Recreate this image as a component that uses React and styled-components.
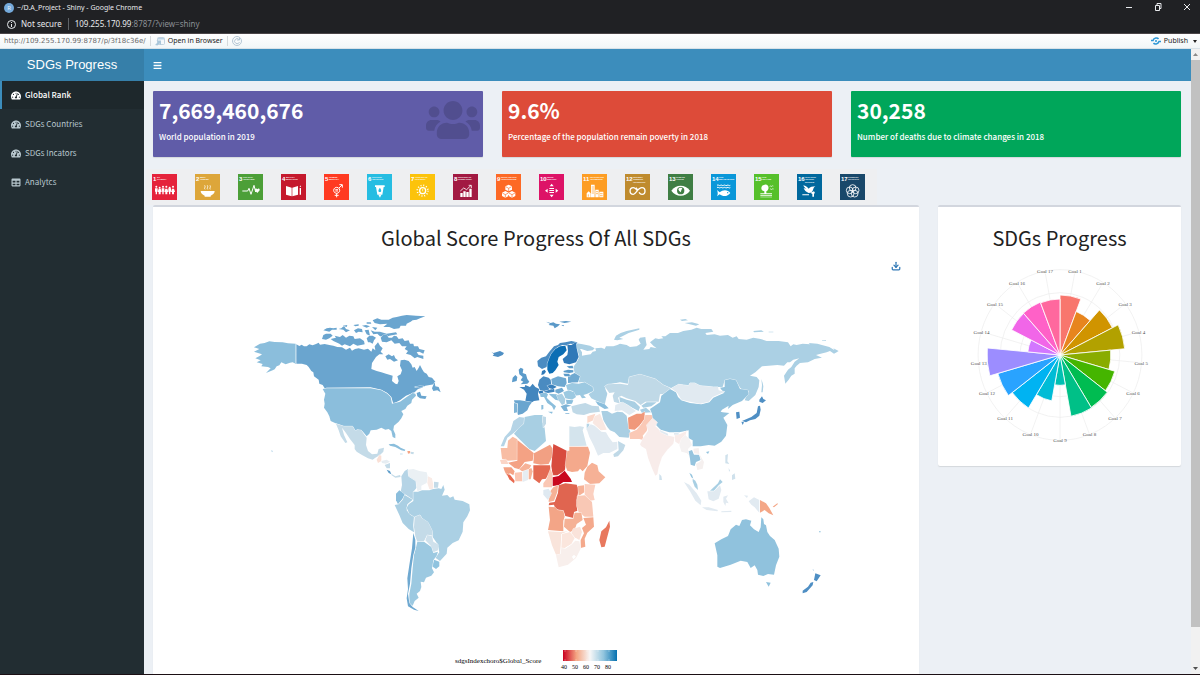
import React, { useState } from 'react';
import styled, { createGlobalStyle } from 'styled-components';
import { FaBars, FaTable, FaTachometerAlt, FaUsers } from 'react-icons/fa';
import { FiDownload } from 'react-icons/fi';

const GlobalStyle = createGlobalStyle`
  * {
    box-sizing: border-box;
  }

  body {
    margin: 0;
    overflow: hidden;
    font-family: 'Noto Sans CJK SC', 'Noto Sans', sans-serif;
  }

  button {
    font: inherit;
    border: none;
    background: transparent;
    padding: 0;
    cursor: pointer;
  }
`;

// Browser window
const Window = styled.div`
  height: 100vh;
  display: flex;
  flex-direction: column;
  overflow: hidden;
  border-bottom: 1px solid #1b0f14;
`;

const TitleBar = styled.div`
  display: flex;
  align-items: center;
  height: 15px;
  padding: 0 9px 0 4px;
  gap: 3px;
  background: #202124;
  color: #e8eaed;
  font-family: 'Noto Sans', sans-serif;
  font-size: 7px;
  line-height: 12px;
`;

const Favicon = styled.span`
  width: 10px;
  height: 10px;
  border-radius: 50%;
  background: #75aadb;
  color: #e6f0fa;
  font-size: 6px;
  line-height: 10px;
  text-align: center;
`;

const WindowButtons = styled.div`
  display: flex;
  align-self: flex-start;
  align-items: center;
  gap: 21px;
  height: 13px;
  margin-left: auto;
`;

const WindowButton = styled.button`
  display: flex;
  color: #e8eaed;
`;

const AddressBar = styled.div`
  display: flex;
  align-items: center;
  height: 19px;
  padding: 0 7px;
  background: #202124;
  border-bottom: 1px solid #4a4548;
  color: #e8eaed;
  font-family: 'Noto Sans', sans-serif;
  font-size: 8px;
  line-height: 12px;
`;

const Secure = styled.span`
  margin-left: 5px;
  padding-right: 6px;
  margin-right: 6px;
  border-right: 1px solid #5f6368;
`;

const UrlRest = styled.span`
  color: #8b8f94;
`;

const ViewerBar = styled.div`
  display: flex;
  align-items: center;
  height: 15px;
  padding: 0 3px 0 4px;
  background: linear-gradient(#fff, #f1f6f8);
  border-bottom: 1px solid #d8e2e8;
  color: #222;
  font-family: 'Noto Sans', sans-serif;
  font-size: 7px;
  line-height: 12px;
`;

const ViewerUrl = styled.span`
  color: #6b6b6b;
  font-family: 'DejaVu Sans', sans-serif;
`;

const ViewerDivider = styled.span`
  width: 1px;
  height: 10px;
  margin: 0 4px;
  background: #d6dadc;
`;

const ViewerButton = styled.button`
  display: flex;
  align-items: center;
  gap: 3px;
  color: #222;
  margin-left: ${(props) => (props.$right ? 'auto' : '0')};
`;

// Dashboard
const Dashboard = styled.div`
  flex: 1;
  min-height: 0;
  display: grid;
  grid-template-columns: 144px 1fr 9px;
`;

const Sidebar = styled.aside`
  background: #222d32;
`;

const Brand = styled.div`
  height: 32px;
  background: #367fa9;
  color: #fff;
  font-family: 'Liberation Sans', Arial, sans-serif;
  font-size: 13px;
  line-height: 32px;
  text-align: center;
`;

const Menu = styled.nav`
  display: flex;
  flex-direction: column;
  gap: 1px;
`;

const MenuItem = styled.a`
  display: flex;
  align-items: center;
  gap: 4px;
  height: 28px;
  padding-left: 9px;
  border-left: 2px solid ${(props) => (props.$active ? '#3c8dbc' : 'transparent')};
  background: ${(props) => (props.$active ? '#1e282c' : 'transparent')};
  color: ${(props) => (props.$active ? '#fff' : '#b8c7ce')};
  font-size: 8px;
  font-weight: ${(props) => (props.$active ? 500 : 400)};
  line-height: 12px;
  text-decoration: none;

  svg {
    width: 10px;
    height: 9px;
  }
`;

const Page = styled.div`
  min-width: 0;
  overflow: hidden;
  background: #ecf0f5;
`;

const Navbar = styled.header`
  display: flex;
  align-items: center;
  height: 32px;
  padding-left: 9px;
  background: #3c8dbc;
`;

const MenuToggle = styled.button`
  display: flex;
  color: #fff;
  font-size: 9px;
`;

const Content = styled.main`
  padding: 10px 10px 0 9px;
`;

const BoxRow = styled.div`
  display: grid;
  grid-template-columns: repeat(3, 1fr);
  gap: 19px;
`;

const ValueBox = styled.section`
  display: flex;
  justify-content: space-between;
  height: 66px;
  padding: 7px 3px 0 6px;
  border-radius: 1px;
  background: ${(props) => props.$color};
  color: #fff;
  box-shadow: 0 1px 1px rgba(0, 0, 0, 0.1);
`;

const Value = styled.h3`
  margin: 0 0 8px;
  font-size: 21px;
  font-weight: 700;
  line-height: 24px;
`;

const Caption = styled.p`
  margin: 0;
  font-size: 8px;
  font-weight: 500;
  line-height: 14px;
`;

const BoxIcon = styled.div`
  color: rgba(0, 0, 0, 0.15);
  font-size: 54px;
  line-height: 0;
  margin-top: -5px;
`;

const GoalStrip = styled.div`
  display: flex;
  width: fit-content;
  margin: 12px 0 0 -7px;
  background: #eeeff1;
`;

const GoalButton = styled.button`
  display: flex;
  padding: 5px 12px 5px 6px;

  svg {
    width: 25px;
    height: 26px;
  }
`;

const CardRow = styled.div`
  display: grid;
  grid-template-columns: 766fr 243fr;
  gap: 19px;
  align-items: start;
`;

const Card = styled.section`
  padding-top: 19px;
  border-top: 2px solid #d2d6de;
  border-radius: 2px;
  background: #fff;
  box-shadow: 0 1px 1px rgba(0, 0, 0, 0.1);
`;

const CardTitle = styled.h2`
  margin: 0;
  color: #222;
  font-size: 20px;
  font-weight: 400;
  line-height: 24px;
  text-align: center;
`;

const ChartTools = styled.div`
  display: flex;
  justify-content: flex-end;
  align-items: center;
  height: 28px;
  padding: 4px 18px 0 0;
`;

const DownloadButton = styled.button`
  display: flex;
  color: #337ab7;
  font-size: 10px;
`;

const Chart = styled.svg`
  display: block;
  width: 100%;
  height: auto;
  font-family: 'Liberation Serif', 'Times New Roman', serif;
`;

const Scrollbar = styled.div`
  display: flex;
  flex-direction: column;
  align-items: center;
  background: #f1f1f1;
`;

const ScrollArrow = styled.div`
  height: 11px;
  display: flex;
  align-items: center;
`;

const ScrollTrack = styled.div`
  flex: 1;
  width: 100%;
`;

const ScrollThumb = styled.div`
  height: 94%;
  background: #c1c1c1;
`;

const menuItems = [
  { label: 'Global Rank', icon: <FaTachometerAlt /> },
  { label: 'SDGs Countries', icon: <FaTachometerAlt /> },
  { label: 'SDGs Incators', icon: <FaTachometerAlt /> },
  { label: 'Analytcs', icon: <FaTable /> },
];

const boxes = [
  { value: '7,669,460,676', caption: 'World population in 2019', color: '#605ca8', icon: <FaUsers /> },
  { value: '9.6%', caption: 'Percentage of the population remain poverty in 2018', color: '#dd4b39' },
  { value: '30,258', caption: 'Number of deaths due to climate changes in 2018', color: '#00a65a' },
];

const people = [13, 23, 33, 43, 53, 63];

// Goal pictograms, each on a 75 x 78 tile
const goals = [
  {
    color: '#e5233b',
    lines: ['NO', 'POVERTY'],
    art: people.map((x, i) => (
      <g key={x}>
        <circle cx={x} cy={i % 3 === 1 ? 41 : 38} r="3" />
        <path d={i % 2 ? `M${x - 3} 44h6l3 10h-3v7h-6v-7h-3z` : `M${x - 4} 43h8v10h-2v8h-4v-8h-2z`} />
      </g>
    )),
  },
  {
    color: '#dda63a',
    lines: ['ZERO', 'HUNGER'],
    art: (
      <>
        <path d="M17 51h42c0 7-5 11-12 14v3H29v-3c-7-3-12-7-12-14z" />
        <path d="M30 46c-4-4 3-6-1-12M38 46c-4-4 3-6-1-12M46 46c-4-4 3-6-1-12" fill="none" stroke="#fff" strokeWidth="2.5" />
      </>
    ),
  },
  {
    color: '#4c9f38',
    lines: ['GOOD HEALTH', 'AND WELL-BEING'],
    art: (
      <>
        <path d="M13 51h16l4-8 6 18 9-27 5 20 3-4" fill="none" stroke="#fff" strokeWidth="3" />
        <path d="M58 57l-7-8c-1-6 5-7 7-3 2-4 8-3 7 3z" />
      </>
    ),
  },
  {
    color: '#c5192d',
    lines: ['QUALITY', 'EDUCATION'],
    art: (
      <>
        <path d="M15 36l17 5v26l-17-5zM51 36l-17 5v26l17-5z" />
        <path d="M56 42h4v20h-4zM56 39l2-5 2 5z" />
      </>
    ),
  },
  {
    color: '#ff3a21',
    lines: ['GENDER', 'EQUALITY'],
    art: (
      <path
        d="M38 40a9 9 0 1 0 .1 0zM38 58v12M32 64h12M44 43l10-10M46 32h9v9M34 47h8M34 51h8"
        fill="none"
        stroke="#fff"
        strokeWidth="3"
      />
    ),
  },
  {
    color: '#26bde2',
    lines: ['CLEAN WATER', 'AND SANITATION'],
    art: (
      <>
        <path d="M24 34h29v5h-3l-4 23H31l-4-23h-3z" />
        <path d="M34 62h9l-4 9z" />
        <path d="M38.500 41c6 8 5 13 0 13s-6-5 0-13z" fill="#26bde2" />
      </>
    ),
  },
  {
    color: '#fcc30b',
    lines: ['AFFORDABLE AND', 'CLEAN ENERGY'],
    art: (
      <>
        <circle cx="38" cy="50" r="9" fill="none" stroke="#fff" strokeWidth="4" />
        <path d="M38 45v7" stroke="#fff" strokeWidth="2" />
        <circle cx="38" cy="50" r="16" fill="none" stroke="#fff" strokeWidth="5" strokeDasharray="3 5.370" />
      </>
    ),
  },
  {
    color: '#a21942',
    lines: ['DECENT WORK AND', 'ECONOMIC GROWTH'],
    art: (
      <>
        <path d="M22 57h7v12h-7zM31 52h7v17h-7zM40 54h7v15h-7zM49 44h7v25h-7z" />
        <path d="M22 51l10-9 9 5 13-13M47 34h8v8" fill="none" stroke="#fff" strokeWidth="2.500" />
      </>
    ),
  },
  {
    color: '#fd6925',
    lines: ['INDUSTRY, INNOVATION', 'AND INFRASTRUCTURE'],
    art: (
      <>
        <path d="M38 32l10 5v10l-10 5-10-5V37zM28 51l10 5v10l-10 5-10-5V56zM48 51l10 5v10l-10 5-10-5V56z" />
        <path d="M29 38l9 5 9-5M38 43v8M19 57l9 5 9-5M28 62v8M39 57l9 5 9-5M48 62v8" fill="none" stroke="#fd6925" strokeWidth="2" />
      </>
    ),
  },
  {
    color: '#dd1367',
    lines: ['REDUCED', 'INEQUALITIES'],
    art: <path d="M38 29l6 8H32zM38 70l6-8H32zM18 50l8-6v12zM58 50l-8-6v12zM31 42h14v3H31zM31 48h14v3H31zM31 54h14v3H31z" />,
  },
  {
    color: '#fd9d24',
    lines: ['SUSTAINABLE CITIES', 'AND COMMUNITIES'],
    art: (
      <>
        <path d="M14 70V58l6-6 6 6v12zM27 32h11v38H27zM40 47h10v23H40zM52 53h12v17H52z" />
        <path d="M29 39h7M29 45h7M29 51h7M29 57h7M42 53h6M42 59h6M54 59h8M19 61v7M54 65h8" stroke="#fd9d24" strokeWidth="2" />
      </>
    ),
  },
  {
    color: '#bf8b2e',
    lines: ['RESPONSIBLE', 'CONSUMPTION', 'AND PRODUCTION'],
    art: (
      <path
        d="M38 51c-6-8-9-10-13-10-13 0-13 20 0 20 8 0 13-20 26-20 12 0 12 20 0 20-4 0-7-3-9-6M33 41l6 9"
        fill="none"
        stroke="#fff"
        strokeWidth="4"
      />
    ),
  },
  {
    color: '#3f7e44',
    lines: ['CLIMATE', 'ACTION'],
    art: (
      <>
        <path d="M10 50c14-20 42-20 56 0-14 20-42 20-56 0z" />
        <circle cx="38" cy="50" r="11" fill="#3f7e44" />
        <path d="M31 45c4-6 12-4 12 0-5 2-2 6-5 10-3-3-6-5-7-10z" />
      </>
    ),
  },
  {
    color: '#0a97d9',
    lines: ['LIFE', 'BELOW WATER'],
    art: (
      <>
        <path d="M18 34c4-4 6 3 10 0s6 3 10 0 6 3 10 0 6 3 10 0M18 41c4-4 6 3 10 0s6 3 10 0 6 3 10 0 6 3 10 0" fill="none" stroke="#fff" strokeWidth="3" />
        <path d="M18 48l8 7c10-9 24-9 32 2-8 11-22 12-32 4l-8 6c3-7 3-12 0-19z" />
        <circle cx="50" cy="56" r="2" fill="#0a97d9" />
      </>
    ),
  },
  {
    color: '#56c02b',
    lines: ['LIFE', 'ON LAND'],
    art: (
      <>
        <path d="M32 32c14-2 15 16 5 20v6h17v3H19v-3h12v-6c-14-4-10-18 1-20zM19 64h35v2H19zM19 68h35v2H19z" />
        <path d="M47 37c3-3 4 0 5 1 1-3 3-3 6-2M48 46c3-3 4 0 5 1 1-3 3-3 6-2" fill="none" stroke="#fff" strokeWidth="2" />
      </>
    ),
  },
  {
    color: '#00689d',
    lines: ['PEACE, JUSTICE', 'AND STRONG', 'INSTITUTIONS'],
    art: (
      <>
        <path d="M19 34c7 2 12 5 16 10 4-5 12-7 20-7-5 3-5 6-7 11-2 6-6 9-13 9-8-3-13-8-15-15l8 3c-4-3-7-6-9-11z" />
        <path d="M16 61h20v3H16zM40 56l11-4 3 5-3 2v9h-5v-8z" />
      </>
    ),
  },
  {
    color: '#19486a',
    lines: ['PARTNERSHIPS', 'FOR THE GOALS'],
    art: (
      <g fill="none" stroke="#fff" strokeWidth="2.500">
        <circle cx="38" cy="42" r="10" />
        <circle cx="47" cy="49" r="10" />
        <circle cx="44" cy="59" r="10" />
        <circle cx="32" cy="59" r="10" />
        <circle cx="29" cy="49" r="10" />
      </g>
    ),
  },
];

// Country outlines. Every region has its own origin; three units are one chart pixel.
const mapRegions = [
  {
    name: 'americas',
    x: 240,
    y: 305,
    shapes: [
      ['#8bbedc', 'M42 127L60 116 74 114 88 109 104 111 128 112 144 115 167 116 167 176 158 172 150 173 137 178 124 172 118 181 110 184 104 193 98 196 78 204 92 190 84 186 64 184 68 177 50 172 62 166 46 160 60 152 66 148 42 140 58 132z'],
      ['#8bbedc', 'M94 436l4 2-2 4z'],
      ['#6aa5cf', 'M169 118L178 123 185 119 192 124 200 124 208 118 218 121 228 117 236 113 240 119 254 117 268 120 280 122 292 126 306 127 318 134 330 128 336 137 345 132 356 130 372 134 384 131 394 140 398 130 406 136 404 124 414 112 420 122 428 130 422 140 430 148 418 148 408 156 396 174 394 192 410 198 424 202 438 206 458 212 456 228 466 236 472 238 476 228 472 214 482 208 486 196 480 182 482 166 494 164 506 168 514 178 518 188 524 186 530 198 536 188 540 180 546 192 552 202 560 206 566 216 576 218 586 230 582 238 556 242 546 248 534 252 524 262 498 272 480 286 460 296 454 276 442 264 424 254 392 247 260 248 254 250 248 240 238 236 236 224 222 214 220 202 214 198 206 186 200 180 186 176 169 176z'],
      ['#6aa5cf', 'M576 250L580 240 584 232 586 244 596 246 602 262 592 256 580 258zM530 264L540 260 544 272 560 274 556 282 540 280 532 274zM524 246L540 243 552 244 540 248z'],
      ['#6aa5cf', 'M398 46L412 40 424 44 446 44 458 38 470 36 486 32 500 30 528 32 556 34 540 40 530 44 518 46 512 50 500 56 498 62 482 62 478 70 462 72 448 66 430 66 442 56 420 58 404 54z'],
      ['#6aa5cf', 'M246 102L250 90 258 86 272 86 278 92 268 100 258 104zM272 102L288 98 284 92 300 96 308 90 318 98 328 92 340 94 344 102 360 100 372 108 374 118 352 122 340 116 330 124 314 118 306 122 298 116 280 108z'],
      ['#6aa5cf', 'M250 76L260 70 270 68 280 70 290 68 290 74 276 74 268 80zM296 72L304 70 312 62 318 72 330 76 318 82 310 74zM342 76l12-6 12 2 2 10-12-2-8 4zM374 76l12-2 4 18-10-4zM392 76L404 80 420 80 440 86 468 82 472 88 448 92 440 96 420 94 412 86 400 88z'],
      ['#6aa5cf', 'M380 100L388 92 398 92 408 98 402 106 398 116 390 112 384 112zM366 62l12-2 12 4-10 4zM340 60l16-2 0 4-10 2zM396 66l16 2-6 8zM308 62l14-2-2 6zM380 52l12 0 2 4-14 0z'],
      ['#6aa5cf', 'M422 98L430 90 440 90 446 98 456 98 462 92 470 94 476 102 488 100 494 108 506 106 510 116 520 116 522 124 534 124 538 132 554 136 550 146 538 140 530 142 536 150 550 152 550 162 532 156 524 160 512 150 498 146 504 138 494 132 500 124 486 124 478 114 464 116 454 106 440 112 426 110z'],
      ['#6aa5cf', 'M436 154L446 148 456 154 462 150 466 160 474 166 462 170 450 162 442 164z'],
      ['#8bbedc', 'M248 252L260 250 392 250 424 256 442 266 452 276 456 296 480 290 500 276 518 264 526 266 528 272 516 284 514 294 502 302 496 312 484 318 490 328 484 340 476 350 462 362 460 374 466 388 466 400 458 396 454 378 446 372 436 374 424 368 410 374 392 376 388 386 380 394 372 384 364 376 352 374 346 378 338 364 312 364 290 356 272 348 268 334 262 322 252 308 254 296 252 284 256 266z'],
      ['#c4dbe8', 'M288 356L312 364 338 364 346 378 352 374 364 376 372 388 380 398 378 420 384 438 396 448 412 446 416 432 432 428 430 440 420 450 406 458 398 464 384 460 366 450 350 440 344 432 344 420 330 402 318 384 306 368 312 390 322 412 316 414 302 394 296 376z'],
      ['#fae0d6', 'M410 464L418 450 424 452 424 468 414 474z'],
      ['#e6edf2', 'M424 468L440 464 450 470 438 476 426 474z'],
      ['#c4dbe8', 'M434 480L450 474 450 490 440 490zM454 506l12 8 14-4 2 6-16 2-12-8z'],
      ['#5f9ecb', 'M440 494l10 4 4 10-8-4z'],
      ['#8bbedc', 'M446 418L462 416 474 422 482 428 496 434 494 438 484 436 466 426 450 422zM480 446l8 0 0 2-8 0z'],
      ['#f5a585', 'M502 438l8 0 2 6-8 2z'],
      ['#c4dbe8', 'M512 440l10 2-2 6-8-2z'],
      ['#b5d4e6', 'M484 514L494 498 504 492 506 510 528 524 530 548 520 560 520 586 502 572 482 560 486 540z'],
      ['#eaf0f4', 'M504 494L520 492 538 498 560 502 564 518 560 534 544 542 544 556 532 558 528 528 506 514z'],
      ['#f9ebe6', 'M564 514L576 520 580 540 580 556 568 552 562 534z'],
      ['#c4dbe8', 'M582 530L596 532 594 548 582 548z'],
      ['#8bbedc', 'M468 566L478 556 494 568 490 578 474 598 468 586z'],
      ['#aacfe3', 'M464 600L476 598 488 584 494 570 518 584 502 598 500 616 512 630 522 634 520 660 522 682 506 672 488 654 478 630z'],
      ['#abd0e4', 'M520 560L534 560 546 556 568 556 580 552 596 550 604 552 610 540 614 554 606 572 622 570 630 578 640 574 644 584 668 588 688 598 690 616 682 634 670 652 668 680 656 706 638 714 622 728 620 746 600 768 586 758 598 742 592 716 578 696 576 676 556 656 540 630 524 636 508 626 500 608 506 598 520 588z'],
      ['#c4dbe8', 'M524 636L540 630 546 640 564 652 576 676 578 692 562 690 552 708 532 710 526 694 522 666z'],
      ['#cfe1ec', 'M556 706L562 690 576 694 580 710 594 718 594 736 580 742 572 722z'],
      ['#8fc3df', 'M582 764L598 770 598 784 588 792 576 784z'],
      ['#9cc9e1', 'M532 710L552 710 574 726 580 744 594 740 590 752 580 766 576 790 582 802 574 812 558 818 552 832 542 830 544 846 540 858 530 866 536 878 524 888 518 902 508 894 508 866 514 836 518 790 522 750 528 728z'],
      ['#6fa9d1', 'M520 684L526 704 526 728 520 750 514 790 510 836 504 866 508 894 518 906 536 918 522 914 504 904 500 880 504 852 502 820 508 780 516 730z'],
    ],
  },
  {
    name: 'eurasia',
    x: 480,
    y: 305,
    shapes: [
      ['#5b99c8', 'M198 50l14 4 8-2 8 4 12 2-6 6-10 6-4-8-14-2 4-4zM238 50l20-2 16 2-20 4zM244 60l8 0-2 4z'],
      ['#4f8fc4', 'M34 140L40 144 48 142 60 138 72 144 68 150 54 156 38 152 42 148z'],
      ['#abd0e4', 'M286 114L308 118 330 122 344 130 338 136 322 138 304 132 300 132 306 142 306 152 318 150 332 148 338 140 348 138 346 130 364 128 374 132 378 124 400 124 412 120 420 116 440 120 450 126 470 124 482 116 476 104 480 98 496 96 498 110 500 120 490 134 508 132 512 126 530 130 520 122 510 112 526 100 536 102 550 100 544 94 556 94 570 84 594 84 610 78 634 74 650 68 664 72 694 72 700 80 676 84 680 90 704 88 720 92 744 90 758 98 770 94 776 102 800 104 820 98 842 102 860 108 896 108 924 112 932 124 940 118 950 120 968 116 990 118 986 114 1012 116 1034 122 1048 126 1064 136 1060 130 1076 138 1070 142 1062 146 1050 138 1040 142 1022 146 1008 150 1026 158 1016 160 1004 162 984 172 960 174 950 182 944 190 944 206 934 212 926 224 916 236 912 212 924 194 934 186 944 170 958 160 940 164 930 172 922 172 912 182 892 180 866 182 846 184 826 202 810 212 830 216 838 226 836 246 826 270 806 288 794 286 806 258 786 256 776 242 768 226 750 222 734 226 728 246 700 246 660 242 644 234 630 234 626 242 596 238 574 250 550 240 526 222 480 208 448 216 444 236 420 232 378 240 376 252 382 266 378 282 374 300 350 288 334 280 326 268 340 258 338 246 314 232 296 232 300 214 284 204 280 186 290 172 298 156 290 130z'],
      ['#abd0e4', 'M402 104L408 92 422 84 440 78 478 70 478 74 446 84 430 92 418 98 430 102 412 106zM600 44l16-2 8 4-18 2zM614 54l22-2 22 6-10 4zM820 78l24-2 8 4-30 2zM866 80l14 0 0 2-14 0zM1026 106l12-1 0 2-12 0zM844 222L848 234 850 244 848 262 844 262 846 240z'],
      ['#4b8cc2', 'M172 168L184 158 198 154 208 140 222 124 234 120 240 114 256 112 274 108 292 112 290 118 270 116 262 122 248 120 234 126 224 134 214 146 210 158 204 172 200 186 186 192 174 184z'],
      ['#0d6eb4', 'M202 176L208 160 214 146 226 132 240 124 256 122 260 136 250 148 236 156 232 170 236 180 226 196 218 204 208 206 202 194z'],
      ['#3079b8', 'M262 120L274 120 288 112 290 130 296 156 288 172 268 178 252 174 248 162 262 150 264 138z'],
      ['#3079b8', 'M186 198l8-4 4 6-6 8-8 2zM176 258l14 0 0 8-12 0z'],
      ['#5b9bca', 'M116 194L122 188 130 192 128 204 138 208 142 222 148 230 142 236 122 238 130 230 122 226 128 216 118 208zM98 218L106 210 112 216 110 228 96 232z'],
      ['#4386be', 'M118 246L134 246 136 240 150 246 158 236 166 246 178 252 174 266 178 286 162 288 156 292 136 288 140 266 132 254z'],
      ['#4a8bc1', 'M178 224L190 214 206 218 212 224 214 242 206 248 208 256 194 258 180 256 174 240z'],
      ['#6aa5cf', 'M102 286L120 286 156 292 148 302 142 316 128 326 114 330 112 322 114 296 104 294z'],
      ['#7fb4d7', 'M102 294l10 2 0 26-10 2z'],
      ['#8bbedc', 'M180 268L196 262 204 268 200 278 212 290 228 304 222 316 216 304 202 294 192 276 182 276zM204 320l14 0-2 6zM184 300l6 0 0 12-6 2zM206 266L230 268 242 288 226 284 212 272z'],
      ['#4386be', 'M190 260L204 256 222 250 224 260 204 264z'],
      ['#3a80bb', 'M202 242L218 238 230 246 218 252 208 250z'],
      ['#6fa9d1', 'M214 222L234 214 258 220 260 234 254 246 234 244 216 238z'],
      ['#6fa9d1', 'M226 254L246 248 252 258 236 266 226 262zM264 214L284 204 300 214 294 232 264 234z'],
      ['#5b9bca', 'M260 184L278 182 280 190 268 190zM250 198L264 194 280 196 280 202 268 204 252 202zM250 206L268 206 270 214 254 214z'],
      ['#9cc9e1', 'M258 240L276 234 296 236 314 232 338 246 340 258 322 266 310 270 318 278 306 280 300 270 284 272 278 258 262 254z'],
      ['#9cc9e1', 'M250 262L266 256 282 262 288 276 276 284 256 280z'],
      ['#8bbedc', 'M258 284L280 286 276 296 260 298zM346 288L374 298 386 310 374 312 354 300z'],
      ['#aacfe3', 'M230 270L246 266 256 282 254 296 246 300 236 286z'],
      ['#7fb4d7', 'M242 304L258 298 274 302 260 306 264 318 252 318zM256 324l12 0 0 2-12 0z'],
      ['#c0d9e7', 'M374 244L384 238 420 236 444 240 448 216 480 208 526 222 550 240 572 250 554 266 540 268 536 290 496 290 482 300 466 288 440 280 424 272 414 278 420 296 402 290 398 272 404 262 388 264z'],
      ['#aacfe3', 'M418 276L440 284 464 290 480 306 476 318 452 306 436 296 420 292z'],
      ['#e1eaf1', 'M406 300L428 292 446 302 468 318 448 330 426 316 404 318z'],
      ['#aacfe3', 'M484 302L500 292 530 292 514 304 490 308zM480 314L498 308 514 322 486 324z'],
      ['#c0d9e7', 'M274 304L298 298 316 294 336 302 356 304 360 320 330 324 312 330 290 328 278 322z'],
      ['#aacfe3', 'M364 318L382 318 396 326 412 320 428 322 440 332 444 358 452 384 446 398 418 396 404 382 390 376 382 366 370 346z'],
      ['#fbd9cb', 'M322 334L346 326 340 346 322 354z'],
      ['#f9e8e2', 'M344 334L360 326 368 346 380 374 362 376 338 354z'],
      ['#b5d4e6', 'M320 356l8 0 0 14-8 6z'],
      ['#e1eaf1', 'M320 372L332 358 344 362 364 380 378 382 386 396 398 412 412 410 412 432 388 444 370 444 354 452 342 424 328 396z'],
      ['#c0d9e7', 'M414 408L436 420 430 436 414 454 402 456 400 448 416 436z'],
      ['#f0987a', 'M444 338L470 326 484 326 494 320 494 342 478 362 464 374 446 372z'],
      ['#fac9b6', 'M448 384L470 374 482 360 494 342 496 330 516 330 522 340 506 358 500 378 488 392 492 406 478 402 450 402z'],
      ['#d4e4ed', 'M268 364L284 366 300 364 312 366 308 376 320 422 268 424z'],
      ['#b5d4e6', 'M100 348L118 336 134 338 132 356 116 372 96 388 82 398 72 424 62 424 74 396 92 376z'],
      ['#a8cfe3', 'M134 336L164 330 188 330 188 352 194 370 198 408 164 438 148 432 102 386 116 370 132 356z'],
      ['#c0d9e7', 'M188 334l10 2 0 20-8 12z'],
    ],
  },
  {
    name: 'africa',
    x: 480,
    y: 400,
    shapes: [
      ['#f8bda4', 'M62 144L82 144 84 122 98 110 112 118 114 180 84 182 66 176z'],
      ['#f4a284', 'M112 120L162 160 158 182 134 186 118 208 104 204 84 188 112 182z'],
      ['#f2a083', 'M162 160L210 134 218 146 216 172 206 192 182 194 160 190z'],
      ['#d84b3e', 'M220 132L260 152 260 180 254 212 232 226 218 226 214 198z'],
      ['#f4a98c', 'M268 140L324 140 330 158 322 198 308 214 300 206 294 214 276 216 262 212 256 196 262 152 268 152z'],
      ['#fbd5c6', 'M60 180L78 178 86 192 64 192z'],
      ['#f4a284', 'M70 202L94 202 104 214 100 226 90 220 80 226 74 214z'],
      ['#e8694f', 'M80 222L90 224 104 242 102 250 88 238z'],
      ['#fbc6b2', 'M104 218L126 216 128 244 106 244z'],
      ['#e6edf2', 'M128 212L144 208 144 240 128 246z'],
      ['#f6b297', 'M118 208L136 190 154 196 148 206 126 214z'],
      ['#f6b297', 'M146 208L154 204 158 214 152 238 146 238z'],
      ['#e46a52', 'M160 196L188 196 210 196 212 212 198 236 186 238 178 250 160 236z'],
      ['#fac7b4', 'M212 206L218 224 216 252 216 262 190 262 190 250 200 236z'],
      ['#c9081f', 'M218 232L236 228 254 212 272 236 276 246 250 246 236 256 218 258z'],
      ['#f6b196', 'M322 200L336 188 352 196 356 214 376 232 358 250 330 252 312 238 314 218z'],
      ['#e06550', 'M236 256L256 250 290 254 296 268 290 300 292 332 282 336 280 354 256 348 250 332 226 328 222 314 206 316 208 308 224 306 234 278z'],
      ['#f6b196', 'M206 280L220 262 234 256 232 276 222 302 206 306z'],
      ['#dfe9f1', 'M190 270L206 266 214 280 204 300 190 284z'],
      ['#f6b196', 'M294 258L312 256 314 276 296 288z'],
      ['#fbd0c0', 'M314 252L346 254 340 282 344 300 330 302 314 284z'],
      ['#f9c8b5', 'M292 288L314 286 336 306 340 350 314 350 296 336 290 318z'],
      ['#f3a587', 'M206 320L226 322 232 330 250 332 254 350 250 362 250 394 204 390 210 360z'],
      ['#f5b195', 'M254 356L280 356 284 338 304 338 308 360 290 372 284 390 270 396 252 380z'],
      ['#f4a98c', 'M310 354L340 352 342 380 322 398 314 416 316 440 302 444 302 420 312 400 306 384 318 374z'],
      ['#fae3da', 'M280 386L300 380 306 396 298 420 284 412 274 400z'],
      ['#f9e4db', 'M204 394L244 396 264 394 244 402 242 438 240 464 228 464 216 436z'],
      ['#fbe6dd', 'M246 402L270 396 284 414 274 432 254 444 244 446z'],
      ['#f8efec', 'M228 466L242 462 244 444 256 446 274 434 286 422 298 424 302 446 288 474 264 494 236 502zM276 470L282 464 288 470 280 478z'],
      ['#e8785e', 'M388 362L390 380 382 410 374 440 364 442 358 420 364 394 378 382z'],
    ],
  },
  {
    name: 'east asia',
    x: 640,
    y: 305,
    shapes: [
      ['#95c4de', 'M30 312L60 292 64 272 90 252 108 262 114 276 124 286 150 294 184 298 208 292 220 278 252 264 240 248 254 246 254 226 270 222 288 226 300 252 324 256 326 268 306 288 278 300 264 312 266 302 246 314 242 320 248 322 268 324 250 338 262 360 258 392 244 410 224 422 206 420 182 424 158 424 158 406 146 400 146 376 118 382 88 382 62 374 40 352 36 326z'],
      ['#e1eaf1', 'M94 250L116 238 146 242 150 234 164 234 180 242 220 246 234 246 236 256 254 260 218 276 206 290 180 296 150 290 124 284 112 264z'],
      ['#4f8fc4', 'M288 322L298 320 300 338 290 342z'],
      ['#4f8fc4', 'M358 284L366 274 370 282 378 286 368 294 358 290zM354 304L360 302 362 314 358 332 346 342 330 346 318 352 306 348 334 336 350 324zM304 350l8 2-4 8z'],
      ['#f8ecea', 'M38 340L52 352 46 364 64 380 86 392 104 396 100 416 82 434 66 456 56 486 52 508 46 512 36 490 24 458 18 432 4 424 0 418 8 402 24 378 20 360z'],
      ['#f8ecea', 'M104 390L122 386 140 378 136 392 118 418 106 410z'],
      ['#e1eaf1', 'M58 374L84 386 84 392 62 382zM102 384l14 0 0 5-14 0z'],
      ['#f5f2f2', 'M124 402L136 390 148 402 156 420 144 432 148 452 140 444 124 440 118 420z'],
    ],
  },
  {
    name: 'oceania',
    x: 640,
    y: 440,
    shapes: [
      ['#95c4de', 'M146 34L156 30 162 44 178 44 182 60 168 66 164 78 152 74 150 56zM148 98l8 6 4 12-6-4zM198 36l10-2-4 8z'],
      ['#f5f0ef', 'M160 26L176 24 178 42 192 66 188 86 172 90 168 72 184 62 178 42 162 40z'],
      ['#a8cfe3', 'M158 116l8 6 6 12 2 16-10-10-6-16zM210 152L234 130 240 118 248 126 236 136 222 152z'],
      ['#e1eaf1', 'M202 154L222 154 240 136 244 150 236 176 220 184 206 178zM132 126L148 134 170 160 184 182 182 196 166 182 150 154zM186 202L206 202 234 210 232 214 200 210zM250 170l14-4-6 10 8 14-8-2-2 10-6-12zM244 214l30-2 0 4-30 1zM312 166l12 1-3 7zM326 184L342 172 358 180 358 218 344 202 334 194z'],
      ['#f4a787', 'M360 180L378 190 388 204 400 226 386 220 374 210 360 218zM398 200l14-10 2 2-12 10z'],
      ['#cfe1ec', 'M256 46L264 42 262 64 268 72 256 70zM276 106l8-6 2 16-10 4zM266 84l4 8-3 3zM58 102l6 6 2 12-8 0z'],
      ['#90c2dd', 'M224 310L244 298 264 288 272 268 288 254 298 258 306 240 318 238 334 242 330 256 342 268 356 276 362 262 364 232 370 238 372 252 378 256 382 276 390 288 404 300 416 326 418 350 408 376 402 404 384 402 370 408 354 404 352 390 344 376 332 384 322 366 302 362 272 374 240 384 232 380 232 346z'],
      ['#90c2dd', 'M378 426L392 428 386 440zM537 274l5 0 0 3-5 0z'],
      ['#4f8fc4', 'M526 400L542 406 530 424 522 420zM512 428L520 426 518 436 500 456 488 460 488 452 504 440zM518 388l3 2-1 2z'],
    ],
  },
];

const legendTicks = [40, 50, 60, 70, 80];

const goalScores = [
  [180, '#f8766d'],
  [140, '#e7851e'],
  [183, '#d09400'],
  [203, '#b2a100'],
  [159, '#89ac00'],
  [178, '#45b500'],
  [185, '#00bc51'],
  [187, '#00c087'],
  [91, '#00c0b2'],
  [140, '#00bcd6'],
  [187, '#00b3f2'],
  [202, '#29a3ff'],
  [228, '#9c8dff'],
  [101, '#d277ff'],
  [169, '#f166e8'],
  [170, '#ff61c7'],
  [168, '#ff689e'],
];

const SLICE = (2 * Math.PI) / goalScores.length;

const polar = (angle, radius) => [Math.sin(angle) * radius * 0.96, -Math.cos(angle) * radius];

const wedge = (i, radius) => {
  const [x1, y1] = polar(i * SLICE, radius);
  const [x2, y2] = polar((i + 1) * SLICE, radius);
  return `M0 0L${x1} ${y1}A${radius * 0.96} ${radius} 0 0 1 ${x2} ${y2}z`;
};

const GoalTile = ({ goal, number }) => {
  const captionSize = goal.lines.some((line) => line.length > 11) ? 4 : 6;

  return (
    <svg viewBox="0 0 75 78" fill="#fff" fontFamily="'Liberation Sans', sans-serif" fontWeight="700" aria-hidden="true">
      <rect width="75" height="78" fill={goal.color} />
      <text x="3" y="22" fontSize="18">
        {number}
      </text>
      {goal.lines.map((line, i) => (
        <text key={line} x={number > 9 ? 24 : 15} y={12 + i * 7} fontSize={captionSize}>
          {line}
        </text>
      ))}
      {goal.art}
    </svg>
  );
};

const WorldMap = () => (
  <Chart viewBox="153 278 766 411" role="img" aria-label="Global score by country">
    <defs>
      <linearGradient id="scoreScale">
        <stop offset="0" stopColor="#ca0020" />
        <stop offset="0.25" stopColor="#f4a582" />
        <stop offset="0.5" stopColor="#f7f7f7" />
        <stop offset="0.75" stopColor="#92c5de" />
        <stop offset="1" stopColor="#0571b0" />
      </linearGradient>
    </defs>
    {mapRegions.map((region) => (
      <g key={region.name} transform={`translate(${region.x} ${region.y}) scale(0.33333)`}>
        {region.shapes.map(([fill, d]) => (
          <path key={d} d={d} fill={fill} fillRule="evenodd" stroke="#fff" strokeWidth="2" strokeLinejoin="round" paintOrder="stroke" />
        ))}
      </g>
    ))}
    <path d="M295.500 344v20" stroke="#b9d9ea" />
    <text x="455" y="663" fontSize="7">
      sdgsIndexchoro$Global_Score
    </text>
    <rect x="563" y="650" width="54" height="11" fill="url(#scoreScale)" />
    {legendTicks.map((tick, i) => (
      <g key={tick}>
        <path d={`M${565 + i * 11} 650v2m0 7v2`} stroke="#fff" strokeWidth="0.500" opacity="0.6" />
        <text x={564 + i * 11} y="669" fontSize="6" textAnchor="middle">
          {tick}
        </text>
      </g>
    ))}
  </Chart>
);

const GoalsChart = () => (
  <Chart viewBox="938 250 243 216" role="img" aria-label="Progress by goal">
    <g transform="translate(1060 355)">
      <g transform="scale(0.33333)">
        {[63, 125, 187, 256].map((r) => (
          <ellipse key={r} rx={r * 0.96} ry={r} fill="none" stroke="#ececec" strokeWidth="2" />
        ))}
        {goalScores.map(([, color], i) => {
          const [x, y] = polar((i + 0.5) * SLICE, 256);
          return <path key={color} d={`M0 0L${x} ${y}`} stroke="#ececec" strokeWidth="2" />;
        })}
        {goalScores.map(([score, color], i) => (
          <path key={color} d={wedge(i, score)} fill={color} stroke="#fff" strokeWidth="2.500" />
        ))}
      </g>
      {goalScores.map(([, color], i) => {
        const [x, y] = polar((i + 0.5) * SLICE, 85);
        return (
          <text key={color} x={x} y={y + 2} fontSize="5" fill="#4d4d4d" textAnchor="middle" stroke="#fff" strokeWidth="1" paintOrder="stroke">
            Goal {i + 1}
          </text>
        );
      })}
    </g>
  </Chart>
);

const BrowserChrome = () => (
  <>
    <TitleBar>
      <Favicon>R</Favicon>
      <span>~/D.A_Project - Shiny - Google Chrome</span>
      <WindowButtons>
        <WindowButton aria-label="Minimize">
          <svg width="8" height="8" stroke="currentColor"><path d="M1 4.500h6" /></svg>
        </WindowButton>
        <WindowButton aria-label="Restore">
          <svg width="8" height="8" fill="none" stroke="currentColor"><path d="M1.500 2.500h4v5h-4zM3 2V.5h4v5H6" /></svg>
        </WindowButton>
        <WindowButton aria-label="Close">
          <svg width="8" height="8" stroke="currentColor"><path d="M1 1l6 6M7 1L1 7" /></svg>
        </WindowButton>
      </WindowButtons>
    </TitleBar>
    <AddressBar>
      <svg width="9" height="9" viewBox="0 0 9 9" fill="none" stroke="currentColor">
        <circle cx="4.500" cy="4.500" r="4" />
        <path d="M4.500 2v1M4.500 4v3" />
      </svg>
      <Secure>Not secure</Secure>
      <span>109.255.170.99</span>
      <UrlRest>:8787/?view=shiny</UrlRest>
    </AddressBar>
    <ViewerBar>
      <ViewerUrl>http://109.255.170.99:8787/p/3f18c36e/</ViewerUrl>
      <ViewerDivider />
      <ViewerButton>
        <svg width="10" height="9" viewBox="0 0 10 9">
          <rect x="2.500" y="0.500" width="7" height="7" rx="1" fill="#f4f8fb" stroke="#c3d3df" />
          <path d="M3 1h6v1.500H3z" fill="#b9d3e6" />
          <path d="M0 8l3-3-1.500-1.500H6V8L4.500 6.500 2.500 8.500z" fill="#a9c6da" />
        </svg>
        Open in Browser
      </ViewerButton>
      <ViewerDivider />
      <ViewerButton aria-label="Refresh">
        <svg width="10" height="10" viewBox="0 0 10 10" fill="none" stroke="#b4c6d4">
          <circle cx="5" cy="5" r="4.500" />
          <path d="M7 3.500A2.500 2.500 0 1 0 7.500 6M7.500 1.500v2.500H5" />
        </svg>
      </ViewerButton>
      <ViewerButton $right>
        <svg width="10" height="8" viewBox="0 0 10 8" fill="none" stroke="#2b96d6" strokeWidth="1.500">
          <path d="M0 3.500h2C3 .5 6.500.5 7.500 2M10 4.500H8C7 7.500 3.500 7.500 2.500 6" />
          <circle cx="5" cy="4" r="1" fill="#2b96d6" stroke="none" />
        </svg>
        Publish
        <svg width="6" height="3" viewBox="0 0 6 3"><path d="M2 0h4L4 3z" fill="#222" /></svg>
      </ViewerButton>
    </ViewerBar>
  </>
);

const App = () => {
  const [active, setActive] = useState('Global Rank');

  return (
    <Window>
      <GlobalStyle />
      <BrowserChrome />
      <Dashboard>
        <Sidebar>
          <Brand>SDGs Progress</Brand>
          <Menu>
            {menuItems.map((item) => (
              <MenuItem key={item.label} href="#" $active={item.label === active} onClick={() => setActive(item.label)}>
                {item.icon}
                {item.label}
              </MenuItem>
            ))}
          </Menu>
        </Sidebar>
        <Page>
          <Navbar>
            <MenuToggle aria-label="Toggle navigation">
              <FaBars />
            </MenuToggle>
          </Navbar>
          <Content>
            <BoxRow>
              {boxes.map((box) => (
                <ValueBox key={box.value} $color={box.color}>
                  <div>
                    <Value>{box.value}</Value>
                    <Caption>{box.caption}</Caption>
                  </div>
                  {box.icon && <BoxIcon>{box.icon}</BoxIcon>}
                </ValueBox>
              ))}
            </BoxRow>
            <GoalStrip>
              {goals.map((goal, i) => (
                <GoalButton key={goal.color} aria-label={goal.lines.join(' ')}>
                  <GoalTile goal={goal} number={i + 1} />
                </GoalButton>
              ))}
            </GoalStrip>
            <CardRow>
              <Card>
                <CardTitle>Global Score Progress Of All SDGs</CardTitle>
                <ChartTools>
                  <DownloadButton aria-label="Download chart">
                    <FiDownload strokeWidth={3} />
                  </DownloadButton>
                </ChartTools>
                <WorldMap />
              </Card>
              <Card>
                <CardTitle>SDGs Progress</CardTitle>
                <GoalsChart />
              </Card>
            </CardRow>
          </Content>
        </Page>
        <Scrollbar>
          <ScrollArrow>
            <svg width="5" height="3" viewBox="0 0 5 3"><path d="M0 3h5L2.500 0z" fill="#8a8a8a" /></svg>
          </ScrollArrow>
          <ScrollTrack>
            <ScrollThumb />
          </ScrollTrack>
          <ScrollArrow>
            <svg width="5" height="3" viewBox="0 0 5 3"><path d="M0 0h5L2.500 3z" fill="#505050" /></svg>
          </ScrollArrow>
        </Scrollbar>
      </Dashboard>
    </Window>
  );
};

export default App;
